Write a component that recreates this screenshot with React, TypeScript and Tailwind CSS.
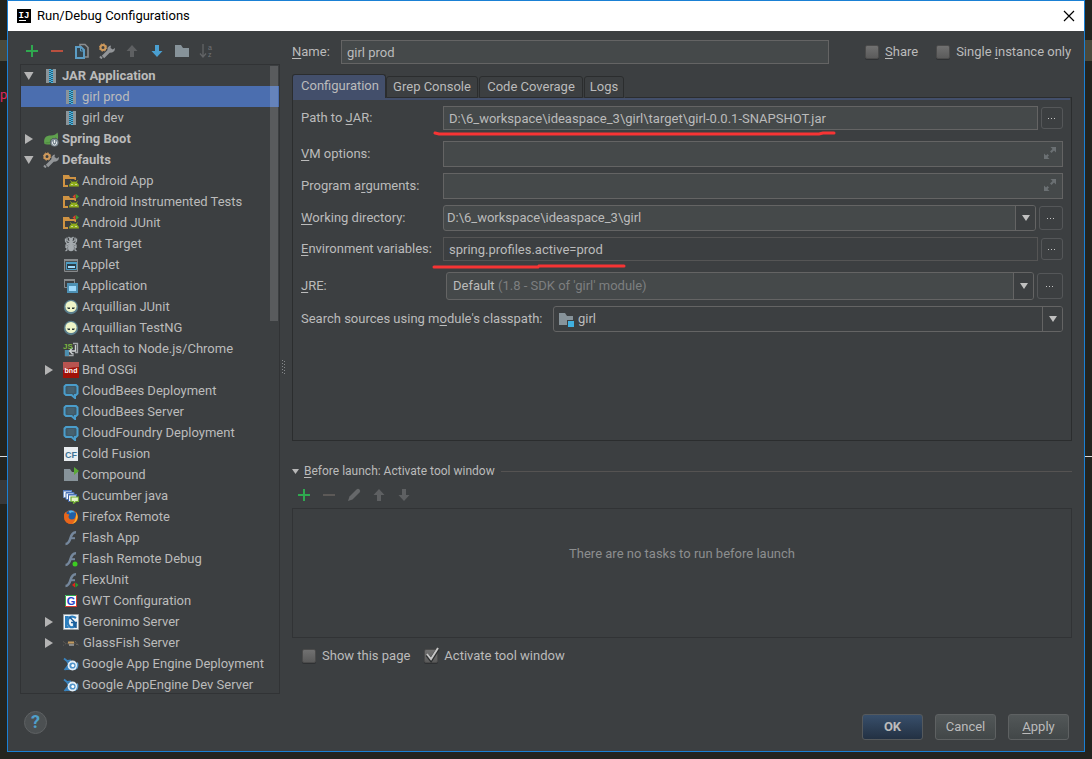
import type { ReactNode } from 'react'
import clsx from 'clsx'

// * ICONS
function Icon({ children, size = 16 }: { children: ReactNode; size?: number }) {
  return (
    <svg width={size} height={size} viewBox="0 0 16 16" className="block shrink-0" aria-hidden="true">
      {children}
    </svg>
  )
}

const PlusIcon = () => (
  <Icon>
    <path d="M8 2v12M2 8h12" stroke="#2fa84f" strokeWidth="2" />
  </Icon>
)

const MinusIcon = ({ disabled }: { disabled?: boolean }) => (
  <Icon>
    <path d="M2 8h12" stroke={disabled ? '#5c5957' : '#b9503f'} strokeWidth="2" />
  </Icon>
)

const CopyIcon = () => (
  <Icon>
    <path d="M6 3V1.500h5l3 3V14h-3" fill="none" stroke="#8a8d8f" strokeWidth="1.600" />
    <path d="M2 4h5l3 3v8H2z" fill="#34454f" stroke="#5b9cc4" strokeWidth="2" />
    <path d="M6.500 4v4H10" fill="none" stroke="#5b9cc4" strokeWidth="1" />
  </Icon>
)

const WrenchIcon = () => (
  <Icon>
    <path d="M4 14 10.500 7.500" stroke="#929598" strokeWidth="3.400" />
    <path d="M12 2.500A3.600 3.600 0 0 0 9 8a3.800 3.800 0 0 0 6.800-3L13.800 6.500 11.500 5z" fill="#929598" />
    <path d="M1 13.500 3 15.500" stroke="#929598" strokeWidth="2" />
    <circle cx="4" cy="4.500" r="2.500" fill="none" stroke="#cf9a5c" strokeWidth="2" />
    <circle cx="4" cy="4.500" r="3.700" fill="none" stroke="#cf9a5c" strokeWidth="1" strokeDasharray="1.450 1.450" />
  </Icon>
)

const UpIcon = () => (
  <Icon>
    <path d="M8 2l5.500 6H10v6H6V8H2.500z" fill="#5e6062" />
  </Icon>
)

const DownIcon = ({ disabled }: { disabled?: boolean }) => (
  <Icon>
    <path d="M8 14 2.500 8H6V2h4v6h3.500z" fill={disabled ? '#5e6062' : '#4a9fd0'} />
  </Icon>
)

const FolderIcon = () => (
  <Icon>
    <path d="M1 2h6l2 3h6v9H1z" fill="#87939a" />
  </Icon>
)

const SortIcon = () => (
  <Icon>
    <path d="M4 1v13M1 10.500 4 14l3-3.500" fill="none" stroke="#626466" strokeWidth="1.300" />
    <text x="9" y="6.500" fontSize="7" fill="#727476" fontFamily="Liberation Sans, sans-serif">
      a
    </text>
    <text x="9" y="14.400" fontSize="7" fill="#727476" fontFamily="Liberation Sans, sans-serif">
      z
    </text>
  </Icon>
)

const PencilIcon = () => (
  <Icon>
    <path d="M2 14l1.500-4.500L10.500 2.500a2 2 0 0 1 3 3L6.500 12.500z" fill="#66686a" />
  </Icon>
)

const JarIcon = () => (
  <Icon>
    <path d="M3 1h3v14H3zM10 1h3v14h-3z" fill="#8b9499" />
    <path d="M6 1h4v14H6z" fill="#2f5f75" />
    <path d="M7 1v14" stroke="#45b8e8" strokeWidth="2" strokeDasharray="1 1" />
    <path d="M9 2v13" stroke="#45b8e8" strokeWidth="2" strokeDasharray="1 1" />
  </Icon>
)

const SpringIcon = () => (
  <Icon>
    <path d="M1.500 13C0 7 3 4.500 8 4.500c3 0 5-1 6.500-3 1.500 5 .5 11.500-6 12-2.500.2-5 0-7-.5z" fill="#5fa04e" />
    <path d="M2.500 12c4 0 8-2 10-5.500" fill="none" stroke="#4a8a3c" />
    <circle cx="11.500" cy="11.500" r="4.500" fill="#3c3f41" />
    <circle cx="11.500" cy="11.500" r="4" fill="#7d8b94" />
    <path d="M9.800 10.500a2.200 2.200 0 1 0 3.400 0M11.500 9v3" fill="none" stroke="#e4e8ea" strokeWidth="1" />
  </Icon>
)

const AndroidIcon = ({ test }: { test?: boolean }) => (
  <Icon>
    <path d="M0 2h6l1 2h6v3h-1.500V6H2v6h3v2H0z" fill="#cf9343" />
    <path d="M6 13.500a5 5 0 0 1 10 0z" fill="#8fae1b" />
    <path d="M7.500 7.500 9 9.500M14.500 7.500 13 9.500" stroke="#8fae1b" />
    <path d="M8.500 11h1v1h-1zM12.500 11h1v1h-1z" fill="#fff" />
    {test && <path d="M12.500 0v5L9.500 2.500z" fill="#d9482b" />}
    {test && <path d="M13 0v5l3-2.500z" fill="#3d9b35" />}
  </Icon>
)

const AntIcon = () => (
  <Icon>
    <ellipse cx="8" cy="12" rx="3" ry="3.200" fill="#a5abaf" />
    <ellipse cx="8" cy="7" rx="2" ry="2.500" fill="#a5abaf" />
    <circle cx="8" cy="3.500" r="2" fill="#a5abaf" />
    <path
      d="M7 2.500 5.500 1M9 2.500 10.500 1M7 6 4 4.500V1.500M9 6l3-1.500V1.500M7 7.500H4L2.500 5V2.500M9 7.500h3L13.500 5V2.500M7 9l-3 1.500V14L2.500 15M9 9l3 1.500V14l1.500 1M6.500 8 3 9v3M9.500 8 13 9v3"
      fill="none"
      stroke="#a5abaf"
      strokeWidth="1.300"
    />
  </Icon>
)

const AppletIcon = () => (
  <Icon>
    <path d="M1.500 2.500h13v12h-13z" fill="#4b4f51" stroke="#86898b" />
    <path d="M1 2h14v2H1z" fill="#86898b" />
    <path d="M3.500 5.500h10v7h-10z" fill="#2b3b45" stroke="#4d9cc2" />
    <path d="M3 5h11v2H3z" fill="#4d9cc2" />
    <path d="M5 9h7v2H5z" fill="#9fd9fa" />
  </Icon>
)

const ApplicationIcon = () => (
  <Icon>
    <path d="M1.500 1.500h10v8h-10z" fill="none" stroke="#86898b" />
    <path d="M1 1h11v2H1z" fill="#86898b" />
    <path d="M4 5h11v10H4z" fill="#4d90b3" />
    <path d="M6 8h7v5H6z" fill="#9fd9fa" />
  </Icon>
)

const ArquillianIcon = () => (
  <Icon>
    <circle cx="8" cy="8" r="7.200" fill="#5b7f8d" />
    <circle cx="8" cy="7.500" r="5.600" fill="#eef5c9" />
    <path d="M4 8.500h3v1.500H5zM9 8.500h3L11 10H9z" fill="#2d3a38" />
  </Icon>
)

const NodeJsIcon = () => (
  <Icon>
    <path d="M10 2.500h4.500v9H12M2.500 9v5.500H10V12" fill="none" stroke="#a3a7aa" strokeWidth="1.300" />
    <path d="M2 9h4v6H2z" fill="#4d8fb0" />
    <path d="M12.500 4v6H7M9.500 7 6.500 10l3 3" fill="none" stroke="#d0d3d5" strokeWidth="1.400" />
    <text x="0" y="7.500" fontSize="8" fontWeight="700" fill="#7db83f" fontFamily="Liberation Sans, sans-serif">
      JS
    </text>
  </Icon>
)

const BndIcon = () => (
  <Icon>
    <path d="M0 0h16v16H0z" fill="#a01208" />
    <path d="M0 0h16v5Q8 5 0 8z" fill="#b85450" />
    <text x="8" y="11" fontSize="7" fontWeight="700" textAnchor="middle" fill="#fff" fontFamily="Liberation Sans, sans-serif">
      bnd
    </text>
  </Icon>
)

const CloudIcon = () => (
  <Icon>
    <path d="M3 2h10l1.500 1.500v7L13 12h-1v3l-3.500-3H3L1.500 10.500v-7z" fill="#3f5866" stroke="#4a9dcb" strokeWidth="2" />
    <path d="M4.500 4h7v6h-7z" fill="#46616f" />
  </Icon>
)

const ColdFusionIcon = () => (
  <Icon>
    <path d="M1 1h14v14H1z" fill="#e9edf0" />
    <text x="8" y="11.500" fontSize="9" fontWeight="700" textAnchor="middle" fill="#3d7396" fontFamily="Liberation Sans, sans-serif">
      CF
    </text>
  </Icon>
)

const CompoundIcon = () => (
  <Icon>
    <path d="M1 2h6l2 3h6v9H1z" fill="#87939a" />
    <path d="M11 0v8l5-4z" fill="#5bab36" />
  </Icon>
)

const CucumberIcon = () => (
  <Icon>
    <path d="M.5 2.500h8v7h-8z" fill="#f4f7fb" stroke="#6d8fc4" />
    <path d="M3 4.500h8v7H3z" fill="#f4f7fb" stroke="#4f74b3" />
    <path d="M5.500 6.500h8v7h-8z" fill="#f4f7fb" stroke="#3c62a8" />
    <path d="M.5 2h8v1.500h-8zM3 4h8v1.500H3zM5 6h9v1.500H5z" fill="#4a72b8" />
    <path d="M8 9h7.500v4.500H13L10.500 15.500v-2H8z" fill="#e2f3c4" stroke="#6fa832" strokeWidth="1.200" />
  </Icon>
)

const FirefoxIcon = () => (
  <Icon>
    <circle cx="8" cy="8" r="7" fill="#e05a1c" />
    <circle cx="8" cy="6.500" r="5.400" fill="#1f5fa5" />
    <path d="M5.500 2q4-1.500 6.500 1.500-4-1-5 1z" fill="#58b7e8" />
    <path d="M1.200 5 2.500 3 4 5 6.500 5.500 5.500 7.500q0 3 3.500 3 3 0 3.500-3.500L13.800 4.500q2 5-1.300 8.500-4.500 3.500-9 .5Q.5 10.500 1.200 5z" fill="#e8661b" />
    <path d="M13 3q3 4.500 0 9.500-1.500 2-4 2.300 5-3 4-11.800z" fill="#f6b32c" />
  </Icon>
)

const FlashIcon = ({ debug, test }: { debug?: boolean; test?: boolean }) => (
  <Icon>
    <path d="M13 2.200C9.500 2 8.500 4.500 7.500 8S5 14 2.500 14" fill="none" stroke="#75879c" strokeWidth="2.600" />
    <path d="M7 8.200h5" stroke="#75879c" strokeWidth="2" />
    {debug && <circle cx="12" cy="13" r="2.500" fill="#3ccc21" />}
    {test && <path d="M12 10.500v5L9 13z" fill="#e0241c" />}
    {test && <path d="M12.500 10.500v5l3-2.500z" fill="#2ca02c" />}
  </Icon>
)

const GwtIcon = () => (
  <Icon>
    <path d="M2 2h12v12H2z" fill="#fff" />
    <path d="M14 2.500H2.500V14" fill="none" stroke="#2fa84f" />
    <path d="M13.500 2v12M2 13.500h12" stroke="#d83a32" />
    <text x="8" y="12" fontSize="11" fontWeight="700" textAnchor="middle" fill="#2747c9" fontFamily="Liberation Sans, sans-serif">
      G
    </text>
  </Icon>
)

const GeronimoIcon = () => (
  <Icon>
    <path d="M.5.5h15v15H.5z" fill="#f1f5f8" stroke="#9aa0a4" />
    <path d="M2 2h4L4 6v5l2 3H2z" fill="#2b7dbd" />
    <path d="M13 4Q8.500 1 5.500 4.500 3.500 9 6.500 12.500q2.500 1.500 4.500 0V8.500" fill="none" stroke="#2b7dbd" strokeWidth="2.200" />
    <path d="M6.500 3l5 5v5.500M8 8.500h6M13 8.500V14" fill="none" stroke="#1d5f9b" strokeWidth="1.500" />
  </Icon>
)

const GlassFishIcon = () => (
  <Icon>
    <path d="M0 6.500l3 2L0 10.500" fill="none" stroke="#5f5c57" strokeDasharray="2 1" />
    <path d="M3 8.500Q8 4.500 13 8.500 8 12 3 8.500z" fill="#55534f" />
    <path d="M5 6.500h6v2H5z" fill="#c39a5f" />
    <path d="M6 10h5" stroke="#c9ccce" />
    <path d="M12 6l4 5M13 9.500h3" fill="none" stroke="#66625d" strokeDasharray="2 1" />
  </Icon>
)

const AppEngineIcon = () => (
  <Icon>
    <path d="M1 2.500 4 5M1.500 14 6 8.500 4 5l4-.5" fill="none" stroke="#3a84bf" strokeWidth="1.800" />
    <path d="M1.500 14 6 7l3-2.500 4 3v6.500z" fill="#3a84bf" />
    <circle cx="9.500" cy="9.500" r="4" fill="#4f94cb" stroke="#e3edf5" strokeWidth="1.800" />
    <circle cx="9.800" cy="9.500" r="1.500" fill="#fff" />
    <path d="M14.300 6.500q1.200 3.500-.8 6.500" fill="none" stroke="#5b9dd0" strokeWidth="1.300" />
  </Icon>
)

const ModuleIcon = () => (
  <Icon>
    <path d="M1 2h6l2 3h6v9H1z" fill="#87939a" />
    <path d="M9 9h7v7H9z" fill="#3c3f41" />
    <path d="M10 10h6v6h-6z" fill="#40b0e0" />
  </Icon>
)

const DotsIcon = () => (
  <svg width="8" height="2" className="block" aria-hidden="true">
    <path d="M0 1h1v1H0zM3 1h1v1H3zM6 1h1v1H6z" fill="#c4c4c4" />
  </svg>
)

const ExpandIcon = () => (
  <svg width="12" height="12" viewBox="0 0 12 12" className="block" aria-hidden="true">
    <path d="M6.500 0H12v5.500L10 3.500 7.500 6 6 4.500 8.500 2zM5.500 12H0V6.500L2 8.500 3.500 7 5 8.500 3.500 10z" fill="#6b7073" />
  </svg>
)

// * TREE
const TREE = [
  { label: 'JAR Application', icon: <JarIcon />, level: 0, arrow: 'down' },
  { label: 'girl prod', icon: <JarIcon />, level: 1, selected: true },
  { label: 'girl dev', icon: <JarIcon />, level: 1 },
  { label: 'Spring Boot', icon: <SpringIcon />, level: 0, arrow: 'right' },
  { label: 'Defaults', icon: <WrenchIcon />, level: 0, arrow: 'down' },
  { label: 'Android App', icon: <AndroidIcon />, level: 1 },
  { label: 'Android Instrumented Tests', icon: <AndroidIcon test />, level: 1 },
  { label: 'Android JUnit', icon: <AndroidIcon test />, level: 1 },
  { label: 'Ant Target', icon: <AntIcon />, level: 1 },
  { label: 'Applet', icon: <AppletIcon />, level: 1 },
  { label: 'Application', icon: <ApplicationIcon />, level: 1 },
  { label: 'Arquillian JUnit', icon: <ArquillianIcon />, level: 1 },
  { label: 'Arquillian TestNG', icon: <ArquillianIcon />, level: 1 },
  { label: 'Attach to Node.js/Chrome', icon: <NodeJsIcon />, level: 1 },
  { label: 'Bnd OSGi', icon: <BndIcon />, level: 1, arrow: 'right' },
  { label: 'CloudBees Deployment', icon: <CloudIcon />, level: 1 },
  { label: 'CloudBees Server', icon: <CloudIcon />, level: 1 },
  { label: 'CloudFoundry Deployment', icon: <CloudIcon />, level: 1 },
  { label: 'Cold Fusion', icon: <ColdFusionIcon />, level: 1 },
  { label: 'Compound', icon: <CompoundIcon />, level: 1 },
  { label: 'Cucumber java', icon: <CucumberIcon />, level: 1 },
  { label: 'Firefox Remote', icon: <FirefoxIcon />, level: 1 },
  { label: 'Flash App', icon: <FlashIcon />, level: 1 },
  { label: 'Flash Remote Debug', icon: <FlashIcon debug />, level: 1 },
  { label: 'FlexUnit', icon: <FlashIcon test />, level: 1 },
  { label: 'GWT Configuration', icon: <GwtIcon />, level: 1 },
  { label: 'Geronimo Server', icon: <GeronimoIcon />, level: 1, arrow: 'right', wide: true },
  { label: 'GlassFish Server', icon: <GlassFishIcon />, level: 1, arrow: 'right', wide: true },
  { label: 'Google App Engine Deployment', icon: <AppEngineIcon />, level: 1 },
  { label: 'Google AppEngine Dev Server', icon: <AppEngineIcon />, level: 1 },
]

function TreeArrow({ direction }: { direction?: string }) {
  return (
    <svg width="10" height="10" className="mr-[9px] block shrink-0" aria-hidden="true">
      {direction === 'down' && <path d="M0 1h9.500L4.750 9z" fill="#b4b4b4" />}
      {direction === 'right' && <path d="M1 0l8 5-8 5z" fill="#b4b4b4" />}
    </svg>
  )
}

function Tree() {
  return (
    <div className="relative min-h-0 flex-1 overflow-hidden border border-[#313335]">
      <ul role="tree" aria-label="Configurations">
        {TREE.map(item => (
          <li
            key={item.label}
            role="treeitem"
            aria-selected={!!item.selected}
            className={clsx(
              'flex h-[21px] items-center whitespace-nowrap',
              item.level === 0 ? 'pl-[3px] font-bold' : 'pl-[23px]',
              item.selected && 'bg-[#4b6eaf]',
            )}
          >
            <TreeArrow direction={item.arrow} />
            {item.icon}
            <span className={item.wide ? 'pl-1' : 'pl-[3px]'}>{item.label}</span>
          </li>
        ))}
      </ul>
      <div className="absolute top-px right-px h-[255px] w-2 bg-white/15" />
    </div>
  )
}

// * FORM CONTROLS
function ToolButton({ label, children }: { label: string; children: ReactNode }) {
  return (
    <button type="button" aria-label={label} className="block size-4">
      {children}
    </button>
  )
}

function Checkbox({ id, checked, children }: { id: string; checked?: boolean; children: ReactNode }) {
  return (
    <span className="flex items-center gap-[6px] whitespace-nowrap">
      <span className="relative block size-[14px]">
        <input
          id={id}
          type="checkbox"
          defaultChecked={checked}
          className="block size-[14px] appearance-none rounded-[2px] border border-[#4b4b4b] bg-linear-to-b from-[#717171] to-[#5b5b5b] shadow-[0_1px_0_#2f3133]"
        />
        {checked && (
          <svg width="16" height="16" className="pointer-events-none absolute -top-[2px] left-0" aria-hidden="true">
            <path d="M3 8l4 5 7-11" fill="none" stroke="#2d2f30" strokeWidth="3.500" />
            <path d="M3 7l4 5 7-11" fill="none" stroke="#c6c6c6" strokeWidth="2" />
          </svg>
        )}
      </span>
      <label htmlFor={id}>{children}</label>
    </span>
  )
}

function Row({ id, label, className, children }: { id: string; label: ReactNode; className: string; children: ReactNode }) {
  return (
    <div className={clsx('flex items-center', className)}>
      <label htmlFor={id} className="w-[142px] shrink-0 whitespace-nowrap">
        {label}
      </label>
      {children}
    </div>
  )
}

function TextField({ id, value, className }: { id: string; value: string; className?: string }) {
  return (
    <input
      id={id}
      type="text"
      defaultValue={value}
      className={clsx('h-full w-full min-w-0 border px-[5px] outline-none', className)}
    />
  )
}

function MoreButton({ className }: { className: string }) {
  return (
    <button
      type="button"
      aria-label="Browse"
      className={clsx('flex shrink-0 items-center justify-center rounded-[3px] border border-[#555759]', className)}
    >
      <DotsIcon />
    </button>
  )
}

function ComboBox({ id, value, className, children }: { id: string; value: string; className: string; children?: ReactNode }) {
  return (
    <div className="relative h-full min-w-0 flex-1">
      <select id={id} className={clsx('h-full w-full appearance-none rounded-[3px] border border-[#646464] outline-none', className)}>
        <option>{value}</option>
      </select>
      {children}
      <span className="pointer-events-none absolute inset-y-px right-px flex w-5 items-center justify-center rounded-r-[2px] border-l border-[#646464] bg-[#3c3f41]">
        <svg width="8" height="6" className="block" aria-hidden="true">
          <path d="M0 0h8L4 6z" fill="#c0c0c0" />
        </svg>
      </span>
    </div>
  )
}

// Hand-drawn marker stroke that sits below a field
function Marker({ short }: { short?: boolean }) {
  if (short) {
    return (
      <svg width="194" height="6" className="pointer-events-none absolute -bottom-[8px] left-[131px]" aria-hidden="true">
        <path d="M2 4h104l1-1h85" fill="none" stroke="#f73434" strokeWidth="3" strokeLinecap="round" />
      </svg>
    )
  }
  return (
    <svg width="404" height="6" className="pointer-events-none absolute -bottom-[6px] left-[132px]" aria-hidden="true">
      <path d="M2 3l4 1h380l4-1h11" fill="none" stroke="#f73434" strokeWidth="3" strokeLinecap="round" />
    </svg>
  )
}

function ConfigurationTab() {
  return (
    <div className="flex flex-1 flex-col border-x border-b border-[#2b2d2e]">
      <div className="mr-px h-[2px] bg-[#434f6b]" />
      <div className="flex flex-col pt-[6px] pr-2 pl-2">
        <div className="relative">
          <Row
            id="path"
            className="h-6"
            label={
              <>
                Path to <u>J</u>AR:
              </>
            }
          >
            <TextField
              id="path"
              value="D:\6_workspace\ideaspace_3\girl\target\girl-0.0.1-SNAPSHOT.jar"
              className="border-[#646464] bg-[#45494a]"
            />
            <MoreButton className="ml-[3px] h-[22px] w-[22px]" />
          </Row>
          <Marker />
        </div>
        <Row
          id="vm"
          className="mt-[11px] h-[26px]"
          label={
            <>
              <u>V</u>M options:
            </>
          }
        >
          <span className="relative block h-full flex-1">
            <TextField id="vm" value="" className="border-[#646464] bg-[#45494a]" />
            <button type="button" aria-label="Expand" className="absolute top-[6px] right-[7px]">
              <ExpandIcon />
            </button>
          </span>
        </Row>
        <Row
          id="args"
          className="mt-[6px] h-[26px]"
          label={
            <>
              Program a<u>r</u>guments:
            </>
          }
        >
          <span className="relative block h-full flex-1">
            <TextField id="args" value="" className="border-[#646464] bg-[#45494a]" />
            <button type="button" aria-label="Expand" className="absolute top-[6px] right-[7px]">
              <ExpandIcon />
            </button>
          </span>
        </Row>
        <Row
          id="dir"
          className="mt-[6px] h-[26px]"
          label={
            <>
              <u>W</u>orking directory:
            </>
          }
        >
          <ComboBox id="dir" value="D:\6_workspace\ideaspace_3\girl" className="bg-[#45494a] pl-[3px]" />
          <MoreButton className="ml-[3px] h-6 w-6" />
        </Row>
        <div className="relative mt-[6px]">
          <Row
            id="env"
            className="h-6"
            label={
              <>
                <u>E</u>nvironment variables:
              </>
            }
          >
            <TextField id="env" value="spring.profiles.active=prod" className="border-[#555555]" />
            <MoreButton className="ml-[3px] h-[22px] w-[22px]" />
          </Row>
          <Marker short />
        </div>
        <Row
          id="jre"
          className="mt-[11px] h-7"
          label={
            <>
              <u>J</u>RE:
            </>
          }
        >
          <span className="w-[3px] shrink-0" />
          <ComboBox id="jre" value="Default" className="bg-[#45494a] pl-[6px]">
            <span className="pointer-events-none absolute inset-y-0 left-[52px] flex items-center text-[#7d7f80]">
              (1.8 - SDK of &apos;girl&apos; module)
            </span>
          </ComboBox>
          <MoreButton className="ml-[3px] h-[26px] w-[26px]" />
        </Row>
        <div className="mt-[6px] flex h-[26px] items-center">
          <label htmlFor="classpath" className="w-[252px] shrink-0 whitespace-nowrap">
            Search sources using m<u>o</u>dule&apos;s classpath:
          </label>
          <ComboBox id="classpath" value="girl" className="bg-[#3c3f41] pl-6">
            <span className="pointer-events-none absolute inset-y-0 left-[5px] flex items-center">
              <ModuleIcon />
            </span>
          </ComboBox>
        </div>
      </div>
    </div>
  )
}

const TABS = [
  { label: 'Grep Console', width: 'w-[92px]' },
  { label: 'Code Coverage', width: 'w-[104px]' },
  { label: 'Logs', width: 'w-10' },
]

function Tabs() {
  return (
    <div role="tablist" className="flex h-6 shrink-0 items-end whitespace-nowrap">
      <button
        type="button"
        role="tab"
        aria-selected="true"
        className="h-6 w-[94px] rounded-t-[3px] border-x border-t border-[#2b2d2e] bg-[#434f6b] pb-[2px] pl-2 text-left"
      >
        Configuration
      </button>
      {TABS.map(tab => (
        <button
          key={tab.label}
          type="button"
          role="tab"
          aria-selected="false"
          className={clsx('mr-px h-[22px] rounded-t-[3px] border border-[#2b2d2e]', tab.width)}
        >
          {tab.label}
        </button>
      ))}
      <span className="flex-1 self-stretch border-b border-[#2b2d2e]" />
    </div>
  )
}

function BeforeLaunch() {
  return (
    <section>
      <div className="flex h-5 items-center text-xs">
        <button type="button" className="flex items-center gap-[5px] whitespace-nowrap">
          <svg width="7" height="5" className="block" aria-hidden="true">
            <path d="M0 0h7L3.500 5z" fill="#b8b8b8" />
          </svg>
          <span>
            <u>B</u>efore launch: Activate tool window
          </span>
        </button>
        <span className="ml-[6px] h-px flex-1 bg-[#555352]" />
      </div>
      <div className="mt-[6px] flex gap-[9px] pl-1">
        <ToolButton label="Add task">
          <PlusIcon />
        </ToolButton>
        <ToolButton label="Remove task">
          <MinusIcon disabled />
        </ToolButton>
        <ToolButton label="Edit task">
          <PencilIcon />
        </ToolButton>
        <ToolButton label="Move task up">
          <UpIcon />
        </ToolButton>
        <ToolButton label="Move task down">
          <DownIcon disabled />
        </ToolButton>
      </div>
      <div className="mt-[5px] flex h-[130px] justify-center border border-[#313335] pt-9 text-[#8c8e8f]">
        There are no tasks to run before launch
      </div>
      <div className="mt-2 flex h-5 items-center gap-[14px] pl-[10px]">
        <Checkbox id="show-page">Show this page</Checkbox>
        <Checkbox id="activate" checked>
          Activate tool window
        </Checkbox>
      </div>
    </section>
  )
}

export default function App() {
  return (
    <div className="flex h-screen bg-[#23241f] font-[Roboto,sans-serif] text-[13px] leading-[18px] text-[#bbbbbb] [&_u]:underline-offset-2">
      <div className="w-[7px] shrink-0 overflow-hidden">
        <div className="mt-10 h-[21px] bg-[#4a4a3d]" />
        <div className="mt-[25px] h-[18px] text-right text-[#e0265f]">p</div>
        <div className="mt-[352px] h-px bg-[#d8d8d8]" />
        <div className="mt-[23px] h-6 bg-[#38393a]" />
      </div>

      <div className="mb-[7px] flex min-w-0 flex-1 flex-col border border-[#1a80d4] bg-[#3c3f41]">
        <header className="flex h-[30px] shrink-0 items-center bg-white pr-[9px] pl-[9px] text-black">
          <svg width="14" height="14" className="block shrink-0" aria-hidden="true">
            <path d="M0 0h14v14H0z" fill="#000" />
            <text x="1.500" y="8.500" fontSize="9" fontWeight="700" fill="#fff" fontFamily="Liberation Mono, monospace">
              IJ
            </text>
            <path d="M2 11h7v1H2z" fill="#fff" />
          </svg>
          <h1 className="flex-1 pl-[6px]">Run/Debug Configurations</h1>
          <button type="button" aria-label="Close">
            <svg width="12" height="12" className="block" aria-hidden="true">
              <path d="M1 1l10 10M11 1 1 11" stroke="#000" strokeWidth="1.200" />
            </svg>
          </button>
        </header>

        <main className="flex min-h-0 flex-1 pr-3 pl-3">
          <aside className="flex w-[260px] shrink-0 flex-col">
            <div className="flex h-[33px] gap-[9px] pt-3 pl-1">
              <ToolButton label="Add">
                <PlusIcon />
              </ToolButton>
              <ToolButton label="Remove">
                <MinusIcon />
              </ToolButton>
              <ToolButton label="Copy">
                <CopyIcon />
              </ToolButton>
              <ToolButton label="Edit defaults">
                <WrenchIcon />
              </ToolButton>
              <ToolButton label="Move up">
                <UpIcon />
              </ToolButton>
              <ToolButton label="Move down">
                <DownIcon />
              </ToolButton>
              <ToolButton label="Create folder">
                <FolderIcon />
              </ToolButton>
              <ToolButton label="Sort">
                <SortIcon />
              </ToolButton>
            </div>
            <Tree />
          </aside>

          <div className="flex w-3 shrink-0 items-center pt-[10px] pl-px">
            <svg width="5" height="15" className="block" aria-hidden="true">
              <path d="M1.500 0v15" stroke="#85888a" strokeDasharray="1 2" />
              <path d="M3.500 1v14" stroke="#85888a" strokeDasharray="1 2" />
            </svg>
          </div>

          <div className="flex min-w-0 flex-1 flex-col pt-[9px] pb-7">
            <div className="mb-[10px] flex h-6 shrink-0 items-center">
              <label htmlFor="name" className="w-[49px] shrink-0">
                <u>N</u>ame:
              </label>
              <TextField id="name" value="girl prod" className="border-[#646464] bg-[#45494a]" />
              <div className="flex w-[243px] shrink-0 gap-[18px] pl-9">
                <Checkbox id="share">
                  <u>S</u>hare
                </Checkbox>
                <Checkbox id="single">
                  Single <u>i</u>nstance only
                </Checkbox>
              </div>
            </div>
            <Tabs />
            <ConfigurationTab />
            <div className="h-5 shrink-0" />
            <BeforeLaunch />
          </div>
        </main>

        <footer className="flex h-[57px] shrink-0 items-center justify-between pr-[15px] pb-px pl-4">
          <button
            type="button"
            aria-label="Help"
            className="flex size-[23px] items-center justify-center rounded-full border border-[#5e6163] bg-[#4c5052] text-lg font-bold text-[#4f9fca]"
          >
            ?
          </button>
          <div className="flex gap-3 pt-[10px]">
            <button
              type="button"
              className="h-[26px] w-[61px] rounded-[3px] border border-[#55595c] bg-linear-to-b from-[#384f6b] to-[#233143] font-bold"
            >
              OK
            </button>
            <button type="button" className="h-[26px] w-[61px] rounded-[3px] border border-[#5e6162] bg-linear-to-b from-[#525758] to-[#424748]">
              Cancel
            </button>
            <button type="button" className="h-[26px] w-[61px] rounded-[3px] border border-[#5e6162] bg-linear-to-b from-[#525758] to-[#424748]">
              <u>A</u>pply
            </button>
          </div>
        </footer>
      </div>

      <div className="w-[7px] shrink-0">
        <div className="mt-10 h-[21px] bg-[#4a4a3d]" />
        <div className="mt-[395px] h-px bg-[#d8d8d8]" />
      </div>
    </div>
  )
}
